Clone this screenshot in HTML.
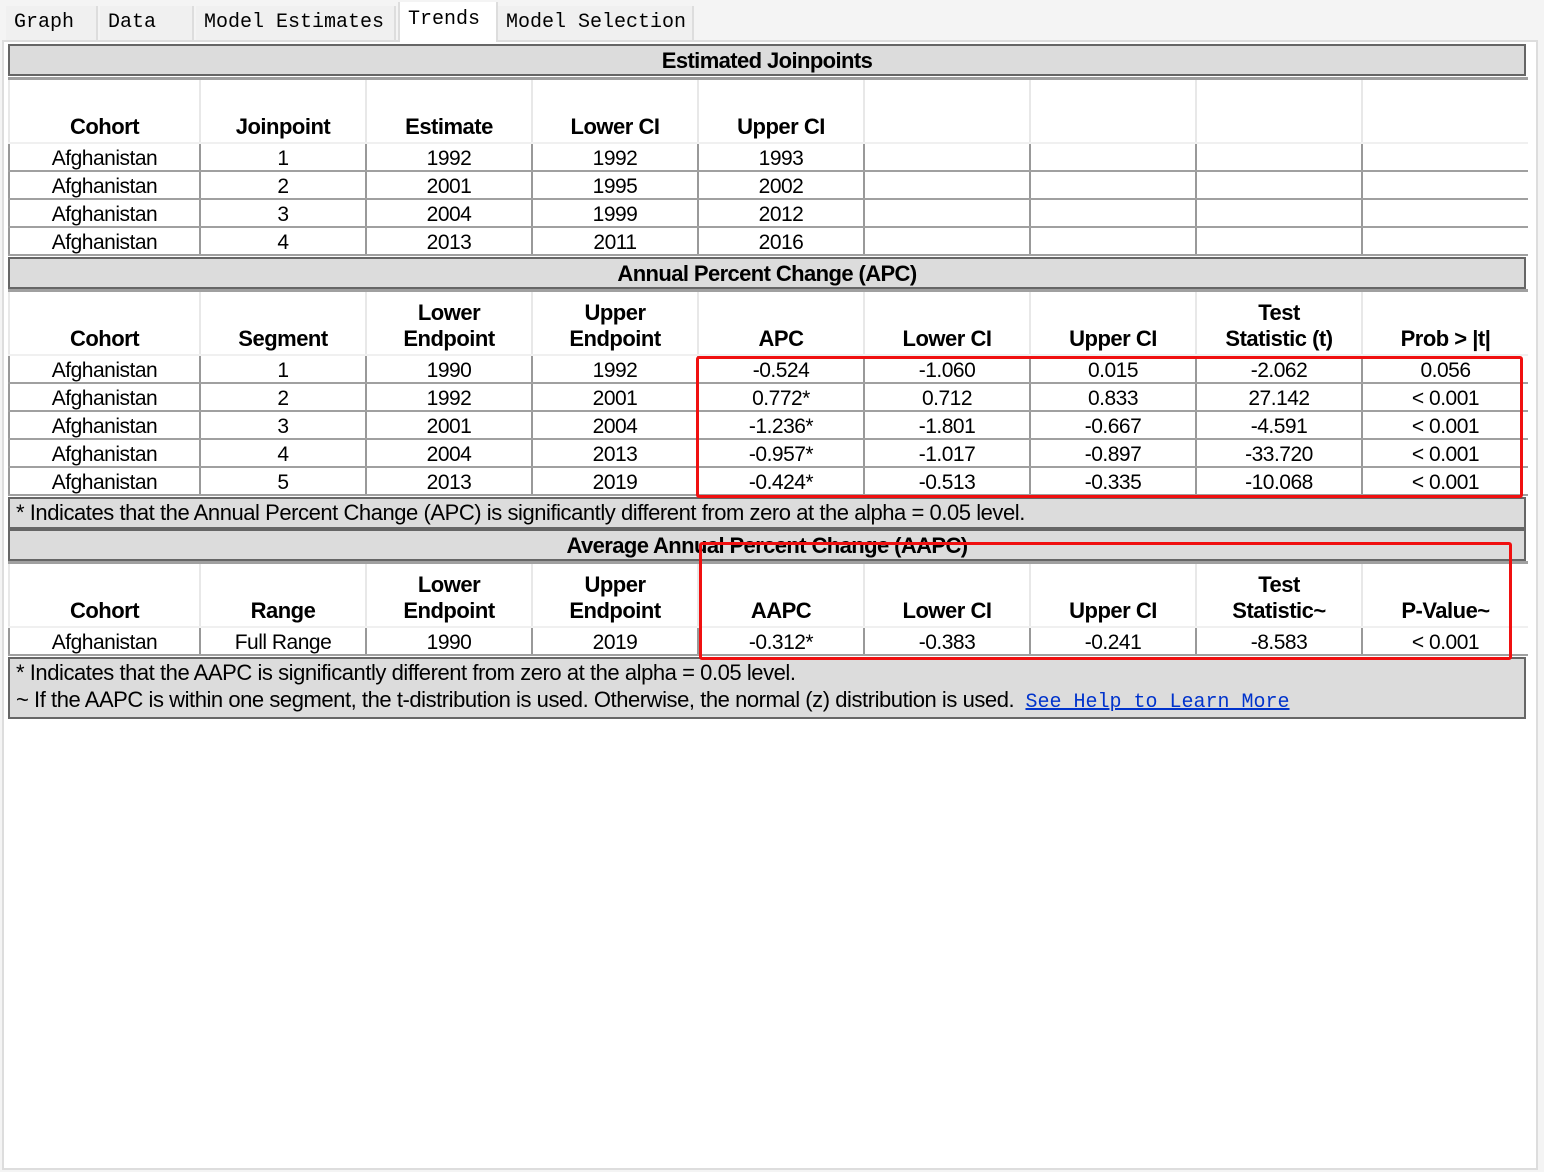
<!DOCTYPE html>
<html><head><meta charset="utf-8"><style>
body{margin:0;width:1544px;height:1172px;background:#f4f4f4;position:relative;overflow:hidden;font-family:"Liberation Sans",Arial,sans-serif;}
.tab{position:absolute;top:6px;height:34px;font-family:"Liberation Mono",monospace;font-size:20px;line-height:34px;padding-left:8px;box-sizing:border-box;border-right:2px solid #ddd;background:#f0f0f0;color:#000}
.panel{position:absolute;left:2px;top:40px;width:1536px;height:1130px;background:#fff;border:2px solid #ddd;box-sizing:border-box}
.sec{position:absolute;left:8px;width:1518px;height:32px;background:#dcdcdc;border:2px solid #666;box-sizing:border-box;text-align:center;font-weight:bold;font-size:22px;line-height:30px;letter-spacing:-0.6px}
table{position:absolute;left:8px;width:1518px;border-collapse:collapse;table-layout:fixed;border-top:3px solid #a0a0a0}
td{text-align:center;font-size:21px;letter-spacing:-0.5px;padding:0;overflow:hidden;white-space:nowrap}
tr.h td{font-weight:bold;font-size:22px;vertical-align:bottom;border-left:2px solid #e8e8e8;border-bottom:2px solid #f0f0f0;line-height:26px;padding-bottom:2px}
tr.d td{border-left:2px solid #999;border-bottom:2px solid #a0a0a0;height:26px;line-height:26px;padding:0;vertical-align:bottom}
tr.d td div{height:26px;line-height:30px;overflow:hidden}
.fn{position:absolute;left:8px;width:1518px;background:#dcdcdc;border:2px solid #666;box-sizing:border-box;font-size:22px;letter-spacing:-0.45px;padding-left:6px;line-height:27px}
.red{position:absolute;border:3px solid #f01010;border-radius:3px;box-sizing:border-box}
a{font-family:"Liberation Mono",monospace;color:#0033cc;text-decoration:underline;letter-spacing:0;font-size:20px}
</style></head><body>
<div class="tab" style="left:6px;width:92px">Graph</div>
<div class="tab" style="left:100px;width:94px">Data</div>
<div class="tab" style="left:196px;width:200px">Model Estimates</div>
<div class="tab" style="left:398px;width:100px;top:2px;height:40px;background:#fff;line-height:36px;z-index:2;border-left:2px solid #ddd">Trends</div>
<div class="tab" style="left:498px;width:196px">Model Selection</div>
<div class="panel"></div>

<div class="sec" style="top:44px">Estimated Joinpoints</div>
<table style="top:77px">
<colgroup><col style="width:191px"><col span="8" style="width:166px"></colgroup>
<tr class="h" style="height:64px"><td>Cohort</td><td>Joinpoint</td><td>Estimate</td><td>Lower CI</td><td>Upper CI</td><td></td><td></td><td></td><td></td></tr>
<tr class="d"><td><div>Afghanistan</div></td><td><div>1</div></td><td><div>1992</div></td><td><div>1992</div></td><td><div>1993</div></td><td></td><td></td><td></td><td></td></tr>
<tr class="d"><td><div>Afghanistan</div></td><td><div>2</div></td><td><div>2001</div></td><td><div>1995</div></td><td><div>2002</div></td><td></td><td></td><td></td><td></td></tr>
<tr class="d"><td><div>Afghanistan</div></td><td><div>3</div></td><td><div>2004</div></td><td><div>1999</div></td><td><div>2012</div></td><td></td><td></td><td></td><td></td></tr>
<tr class="d"><td><div>Afghanistan</div></td><td><div>4</div></td><td><div>2013</div></td><td><div>2011</div></td><td><div>2016</div></td><td></td><td></td><td></td><td></td></tr>
</table>

<div class="sec" style="top:257px">Annual Percent Change (APC)</div>
<table style="top:289px">
<colgroup><col style="width:191px"><col span="8" style="width:166px"></colgroup>
<tr class="h" style="height:64px"><td>Cohort</td><td>Segment</td><td>Lower<br>Endpoint</td><td>Upper<br>Endpoint</td><td>APC</td><td>Lower CI</td><td>Upper CI</td><td>Test<br>Statistic (t)</td><td>Prob &gt; |t|</td></tr>
<tr class="d"><td><div>Afghanistan</div></td><td><div>1</div></td><td><div>1990</div></td><td><div>1992</div></td><td><div>-0.524</div></td><td><div>-1.060</div></td><td><div>0.015</div></td><td><div>-2.062</div></td><td><div>0.056</div></td></tr>
<tr class="d"><td><div>Afghanistan</div></td><td><div>2</div></td><td><div>1992</div></td><td><div>2001</div></td><td><div>0.772*</div></td><td><div>0.712</div></td><td><div>0.833</div></td><td><div>27.142</div></td><td><div>&lt; 0.001</div></td></tr>
<tr class="d"><td><div>Afghanistan</div></td><td><div>3</div></td><td><div>2001</div></td><td><div>2004</div></td><td><div>-1.236*</div></td><td><div>-1.801</div></td><td><div>-0.667</div></td><td><div>-4.591</div></td><td><div>&lt; 0.001</div></td></tr>
<tr class="d"><td><div>Afghanistan</div></td><td><div>4</div></td><td><div>2004</div></td><td><div>2013</div></td><td><div>-0.957*</div></td><td><div>-1.017</div></td><td><div>-0.897</div></td><td><div>-33.720</div></td><td><div>&lt; 0.001</div></td></tr>
<tr class="d"><td><div>Afghanistan</div></td><td><div>5</div></td><td><div>2013</div></td><td><div>2019</div></td><td><div>-0.424*</div></td><td><div>-0.513</div></td><td><div>-0.335</div></td><td><div>-10.068</div></td><td><div>&lt; 0.001</div></td></tr>
</table>
<div class="fn" style="top:497px;height:32px">* Indicates that the Annual Percent Change (APC) is significantly different from zero at the alpha = 0.05 level.</div>

<div class="sec" style="top:529px">Average Annual Percent Change (AAPC)</div>
<table style="top:561px">
<colgroup><col style="width:191px"><col span="8" style="width:166px"></colgroup>
<tr class="h" style="height:64px"><td>Cohort</td><td>Range</td><td>Lower<br>Endpoint</td><td>Upper<br>Endpoint</td><td>AAPC</td><td>Lower CI</td><td>Upper CI</td><td>Test<br>Statistic~</td><td>P-Value~</td></tr>
<tr class="d"><td><div>Afghanistan</div></td><td><div>Full Range</div></td><td><div>1990</div></td><td><div>2019</div></td><td><div>-0.312*</div></td><td><div>-0.383</div></td><td><div>-0.241</div></td><td><div>-8.583</div></td><td><div>&lt; 0.001</div></td></tr>
</table>
<div class="fn" style="top:657px;height:62px">* Indicates that the AAPC is significantly different from zero at the alpha = 0.05 level.<br>~ If the AAPC is within one segment, the t-distribution is used. Otherwise, the normal (z) distribution is used.&nbsp; <a>See Help to Learn More</a></div>

<div class="red" style="left:696px;top:356px;width:827px;height:142px"></div>
<div class="red" style="left:699px;top:542px;width:813px;height:118px"></div>
</body></html>
